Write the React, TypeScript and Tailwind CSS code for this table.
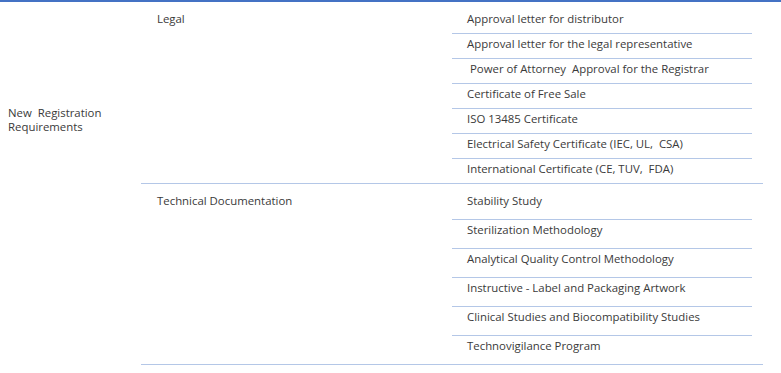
const LEGAL = [
  "Approval letter for distributor",
  "Approval letter for the legal representative",
  " Power of Attorney  Approval for the Registrar",
  "Certificate of Free Sale",
  "ISO 13485 Certificate",
  "Electrical Safety Certificate (IEC, UL,  CSA)",
  "International Certificate (CE, TUV,  FDA)",
];

const TECHNICAL = [
  "Stability Study",
  "Sterilization Methodology",
  "Analytical Quality Control Methodology",
  "Instructive - Label and Packaging Artwork",
  "Clinical Studies and Biocompatibility Studies",
  "Technovigilance Program",
];

type Group = {
  label: string;
  items: string[];
  first: string; // height of first row
  row: string; // height of following rows
  last: string; // height of last row
};

const GROUPS: Group[] = [
  { label: "Legal", items: LEGAL, first: "h-[32px] pt-[7px]", row: "h-[25px]", last: "h-[24px]" },
  { label: "Technical Documentation", items: TECHNICAL, first: "h-[36px] pt-[7px]", row: "h-[29px]", last: "h-[28px]" },
];

function GroupBlock({ group }: { group: Group }) {
  const n = group.items.length;
  return (
    <div className="flex border-b border-[#b4c7e7]">
      <div className="w-[311px] pl-4 pt-[7px] leading-[20px]">{group.label}</div>
      <div className="w-[300px] flex flex-col">
        {group.items.map((item, i) => {
          const size = i === 0 ? group.first : i === n - 1 ? group.last : group.row;
          return (
            <div
              key={i}
              className={`${size} pl-[15px] leading-[20px] whitespace-pre ${i < n - 1 ? "border-b border-[#b4c7e7]" : ""}`}
            >
              {item}
            </div>
          );
        })}
      </div>
    </div>
  );
}

export default function App() {
  return (
    <div
      className="w-[781px] h-[373px] bg-white text-[#3a3a3a] text-[11.4px] border-t-2 border-[#4472c4] flex"
      style={{ fontFamily: '"Open Sans", "Liberation Sans", sans-serif' }}
    >
      <div className="w-[141px] pl-2 pt-[104px] leading-[14px] whitespace-pre">
        {"New  Registration\nRequirements"}
      </div>
      <div className="w-[622px] flex flex-col">
        {GROUPS.map((g) => (
          <GroupBlock key={g.label} group={g} />
        ))}
      </div>
    </div>
  );
}
